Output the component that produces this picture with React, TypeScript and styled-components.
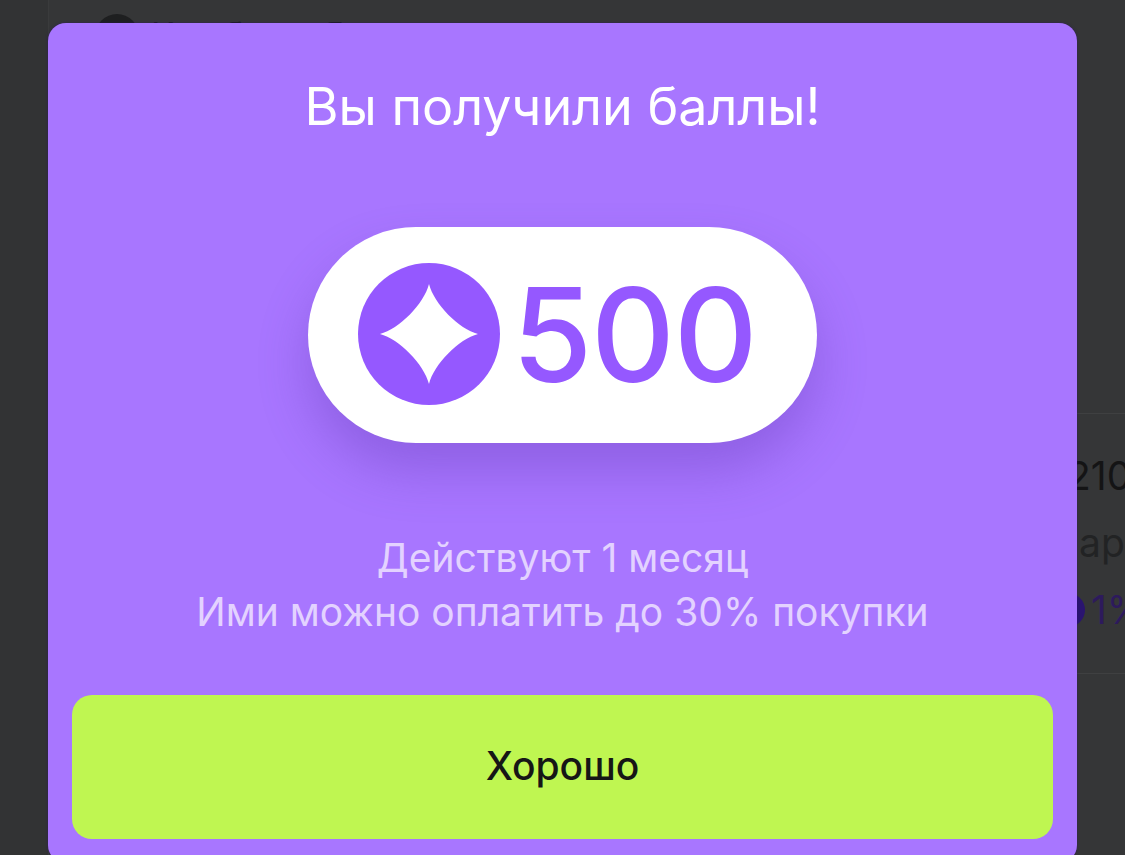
import React from "react";
import styled, { createGlobalStyle } from "styled-components";

const Global = createGlobalStyle`
  html, body { margin: 0; padding: 0; background: #323334; }
  body { width: 1125px; height: 855px; overflow: hidden; font-family: Inter, "Liberation Sans", sans-serif; }
`;

const Screen = styled.div`
  position: relative;
  width: 1125px;
  height: 855px;
  overflow: hidden;
  background: #323334;
`;

const Backdrop = styled.div`
  width: 1125px;
  height: 855px;
  padding-left: 48px;
  box-sizing: border-box;
  display: flex;
`;

const PageColumn = styled.div`
  flex: 1;
  min-width: 0;
  border-left: 1px solid #3a3b3c;
  display: flex;
  flex-direction: column;
  background: #353637;
  overflow: hidden;
`;

const TopRow = styled.div`
  height: 413px;
  flex: none;
  box-sizing: border-box;
  padding: 14px 0 0 46px;
  display: flex;
  gap: 12px;
  align-items: flex-start;
`;

const Avatar = styled.div`
  width: 44px;
  height: 44px;
  border-radius: 50%;
  background: #1e1f20;
  flex: none;
`;

const Shade = styled.div`
  margin-top: 0;
  font-size: 35px;
  color: #1e1f20;
  white-space: nowrap;
`;

const ProductRow = styled.div`
  height: 261px;
  flex: none;
  box-sizing: border-box;
  border-top: 1px solid #3f4041;
  border-bottom: 1px solid #3f4041;
  display: flex;
  flex-direction: column;
  padding: 40px 0 0 1018px;
`;

const Price = styled.div`
  font-size: 39px;
  line-height: 44px;
  color: #141415;
  white-space: nowrap;
`;

const Subtitle = styled.div`
  margin: 23px 0 0 12px;
  font-size: 39px;
  line-height: 44px;
  color: #222324;
  white-space: nowrap;
`;

const Cashback = styled.div`
  margin: 23px 0 0 -16px;
  font-size: 39px;
  line-height: 44px;
  color: #2d1a5c;
  white-space: nowrap;
  display: flex;
  align-items: center;
  gap: 6px;
`;

const CashDot = styled.span`
  width: 34px;
  height: 34px;
  border-radius: 50%;
  background: #2a1470;
  flex: none;
`;

const Modal = styled.section`
  position: absolute;
  left: 48px;
  top: 23px;
  width: 1029px;
  height: 840px;
  box-sizing: border-box;
  border-radius: 18px;
  background: #a876ff;
  box-shadow: 0 0 3px rgba(40, 15, 110, 0.55);
  padding: 0 24px 24px;
  display: flex;
  flex-direction: column;
  align-items: center;
`;

const Title = styled.h2`
  margin: 52px 0 0;
  font-size: 52px;
  line-height: 64px;
  font-weight: 430;
  color: #ffffff;
  white-space: nowrap;
`;

const Pill = styled.div`
  margin-top: 88px;
  width: 509px;
  height: 216px;
  flex: none;
  box-sizing: border-box;
  border-radius: 108px;
  background: #ffffff;
  padding-left: 50px;
  display: flex;
  align-items: center;
  gap: 12px;
  box-shadow: 0 28px 50px rgba(90, 50, 170, 0.32);
`;

const Coin = styled.svg`
  width: 142px;
  height: 142px;
  flex: none;
  margin-top: -2px;
`;

const Amount = styled.span`
  font-size: 130px;
  line-height: 1;
  font-weight: 450;
  color: #9558ff;
  letter-spacing: -1.3px;
`;

const Note = styled.p`
  margin: 88px 0 0;
  font-size: 39px;
  line-height: 54px;
  font-weight: 430;
  color: #e3d2ff;
  text-align: center;
`;

const Action = styled.button`
  margin-top: 56px;
  width: 981px;
  height: 144px;
  flex: none;
  border: none;
  border-radius: 20px;
  background: #bff651;
  color: #161616;
  font-family: inherit;
  font-size: 39px;
  font-weight: 500;
  padding: 0 0 4px;
`;

export default function App() {
  return (
    <Screen>
      <Global />
      <Backdrop>
        <PageColumn>
          <TopRow>
            <Avatar />
            <Shade>Кэшбэк в Яндекс</Shade>
          </TopRow>
          <ProductRow>
            <Price>210</Price>
            <Subtitle>арг</Subtitle>
            <Cashback>
              <CashDot />
              1%
            </Cashback>
          </ProductRow>
        </PageColumn>
      </Backdrop>
      <Modal>
        <Title>Вы получили баллы!</Title>
        <Pill>
          <Coin viewBox="0 0 142 142" aria-hidden="true">
            <circle cx="71" cy="71" r="71" fill="#9558ff" />
            <path
              d="M71 21 C76 41 101 66 120 71 C101 76 76 101 71 121 C66 101 41 76 22 71 C41 66 66 41 71 21 Z"
              fill="#ffffff"
            />
          </Coin>
          <Amount>500</Amount>
        </Pill>
        <Note>
          Действуют 1 месяц
          <br />
          Ими можно оплатить до 30% покупки
        </Note>
        <Action>Хорошо</Action>
      </Modal>
    </Screen>
  );
}
